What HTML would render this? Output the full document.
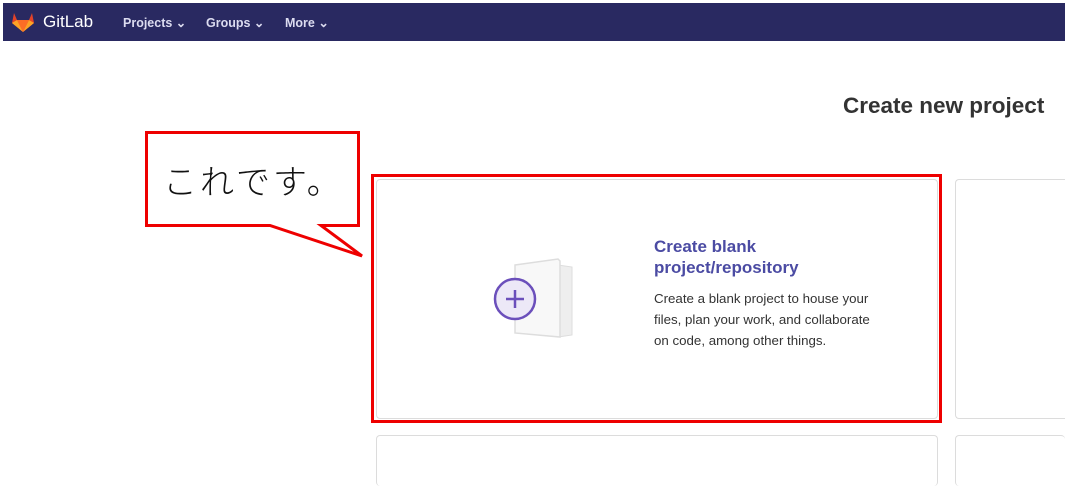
<!DOCTYPE html>
<html><head><meta charset="utf-8"><style>
html,body{margin:0;width:1069px;height:486px;background:#fff;position:relative;overflow:hidden;font-family:"Liberation Sans",sans-serif}
.nav{position:absolute;left:3px;top:3px;width:1062px;height:38px;background:#292961}
.nav span{position:absolute;top:12px;color:#dcdcf0;font-size:12.5px;font-weight:bold}
.card{position:absolute;border:1px solid #dcdcdc;border-radius:4px;background:#fff;box-sizing:border-box}
</style></head><body>
<div class="nav">
<svg style="position:absolute;left:8px;top:8px" width="24" height="22" viewBox="0 0 24 22"><path d="M12 21 L1 12 L3 2 L6 9 L18 9 L21 2 L23 12 Z" fill="#e24329"/><path d="M12 21 L6 9 L18 9Z" fill="#fc6d26"/><path d="M1 12 L6 9 L12 21Z M23 12 L18 9 L12 21Z" fill="#fca326"/></svg>
<div style="position:absolute;left:40px;top:9px;color:#fff;font-size:17px">GitLab</div>
<span style="left:120px">Projects ⌄</span><span style="left:203px">Groups ⌄</span><span style="left:282px">More ⌄</span>
</div>
<div style="position:absolute;left:843px;top:93px;font-size:22.5px;font-weight:bold;color:#333">Create new project</div>
<div class="card" style="left:376px;top:179px;width:562px;height:240px"></div>
<div class="card" style="left:955px;top:179px;width:110px;height:240px;border-right:none;border-radius:4px 0 0 4px"></div>
<div class="card" style="left:376px;top:435px;width:562px;height:51px;border-bottom:none"></div>
<div class="card" style="left:955px;top:435px;width:110px;height:51px;border-bottom:none;border-right:none"></div>
<div style="position:absolute;left:371px;top:174px;width:565px;height:243px;border:3px solid #e00"></div>
<svg style="position:absolute;left:490px;top:255px" width="90" height="90" viewBox="0 0 90 90"><path d="M68 10 L82 12 L82 80 L68 82Z" fill="#eee" stroke="#ddd"/><path d="M25 10 L68 4 L70 6 L70 82 L25 78Z" fill="#f8f8f8" stroke="#ddd" stroke-width="1.5"/><circle cx="25" cy="44" r="20" fill="#ece8f7" stroke="#6b4fbb" stroke-width="2.5"/><path d="M25 35 V53 M16 44 H34" stroke="#6b4fbb" stroke-width="2.5"/></svg>
<div style="position:absolute;left:654px;top:236px;font-size:17px;font-weight:bold;color:#4b4ba3;line-height:21px">Create blank<br>project/repository</div>
<div style="position:absolute;left:654px;top:288px;font-size:13.3px;color:#333;line-height:21px">Create a blank project to house your<br>files, plan your work, and collaborate<br>on code, among other things.</div>
<svg style="position:absolute;left:0;top:0" width="1069" height="486"><path d="M146.5 132.5 H358.5 V225.5 H321 L362 256 L270 225.5 H146.5 Z" fill="#fff" stroke="#e00" stroke-width="3"/></svg>
<div style="position:absolute;left:163px;top:155px;font-size:34px;letter-spacing:3px;color:#111;font-weight:300;font-family:'Liberation Sans','Noto Sans CJK JP',sans-serif">これです。</div>
</body></html>
